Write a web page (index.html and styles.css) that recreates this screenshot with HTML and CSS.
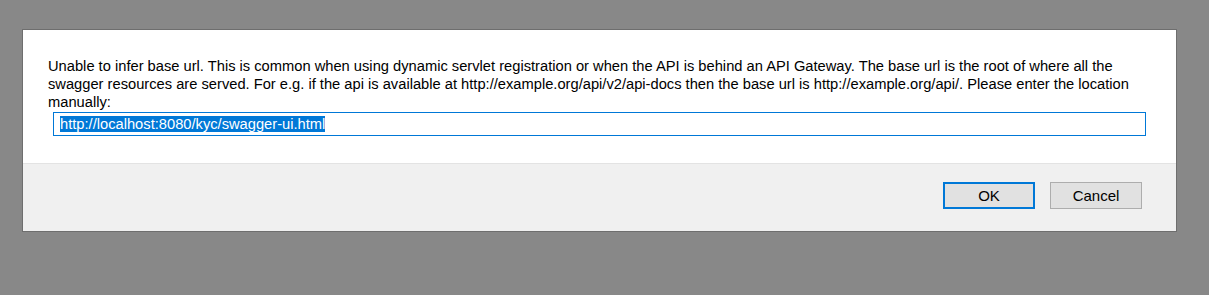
FILE: index.html
```html
<!DOCTYPE html>
<html lang="en">
  <head>
    <meta charset="UTF-8" />
    <title>Prompt</title>
    <link rel="stylesheet" href="styles.css">
  </head>
  <body>
    <div class="dialog">
      <div class="dialog-body">
        <p class="message">
          Unable to infer base url. This is common when using dynamic servlet registration or when the API is behind an API Gateway. The base url is the root of where all the swagger resources are served. For e.g. if the api is available at http://example.org/api/v2/api-docs then the base url is http://example.org/api/. Please enter the location manually:
        </p>
        <div class="url-field">
          <span class="selected">http://localhost:8080/kyc/swagger-ui.html</span>
        </div>
      </div>
      <div class="dialog-footer">
        <button class="btn btn-ok">OK</button>
        <button class="btn">Cancel</button>
      </div>
    </div>
  </body>
</html>
```

FILE: styles.css
```css
* {
  box-sizing: border-box;
  margin: 0;
  padding: 0;
  font-family: "Liberation Sans", Arial, sans-serif;
}

body {
  background: #888888;
  height: 295px;
  padding: 29px 32px 0 22px;
}

.dialog {
  background: #fff;
  border: 1px solid #6e6e6e;
  width: 1155px;
}

.dialog-body {
  padding: 27px 30px 27px 25px;
  border-bottom: 1px solid #e3e3e3;
}

.message {
  font-size: 14.7px;
  line-height: 18px;
  color: #000;
}

.url-field {
  margin: 1px 0 0 5px;
  height: 24px;
  border: 1px solid #0078d7;
  padding: 2px 6px;
  font-size: 14.7px;
  line-height: 18px;
}

.selected {
  background: #0078d7;
  color: #fff;
}

.dialog-footer {
  background: #f0f0f0;
  height: 67px;
  display: flex;
  justify-content: flex-end;
  align-items: flex-start;
  gap: 15px;
  padding: 18px 34px 0 0;
}

.btn {
  width: 92px;
  height: 27px;
  background: #e1e1e1;
  border: 1px solid #adadad;
  font-size: 15px;
  color: #000;
}

.btn-ok {
  border: 2px solid #0078d7;
}
```
